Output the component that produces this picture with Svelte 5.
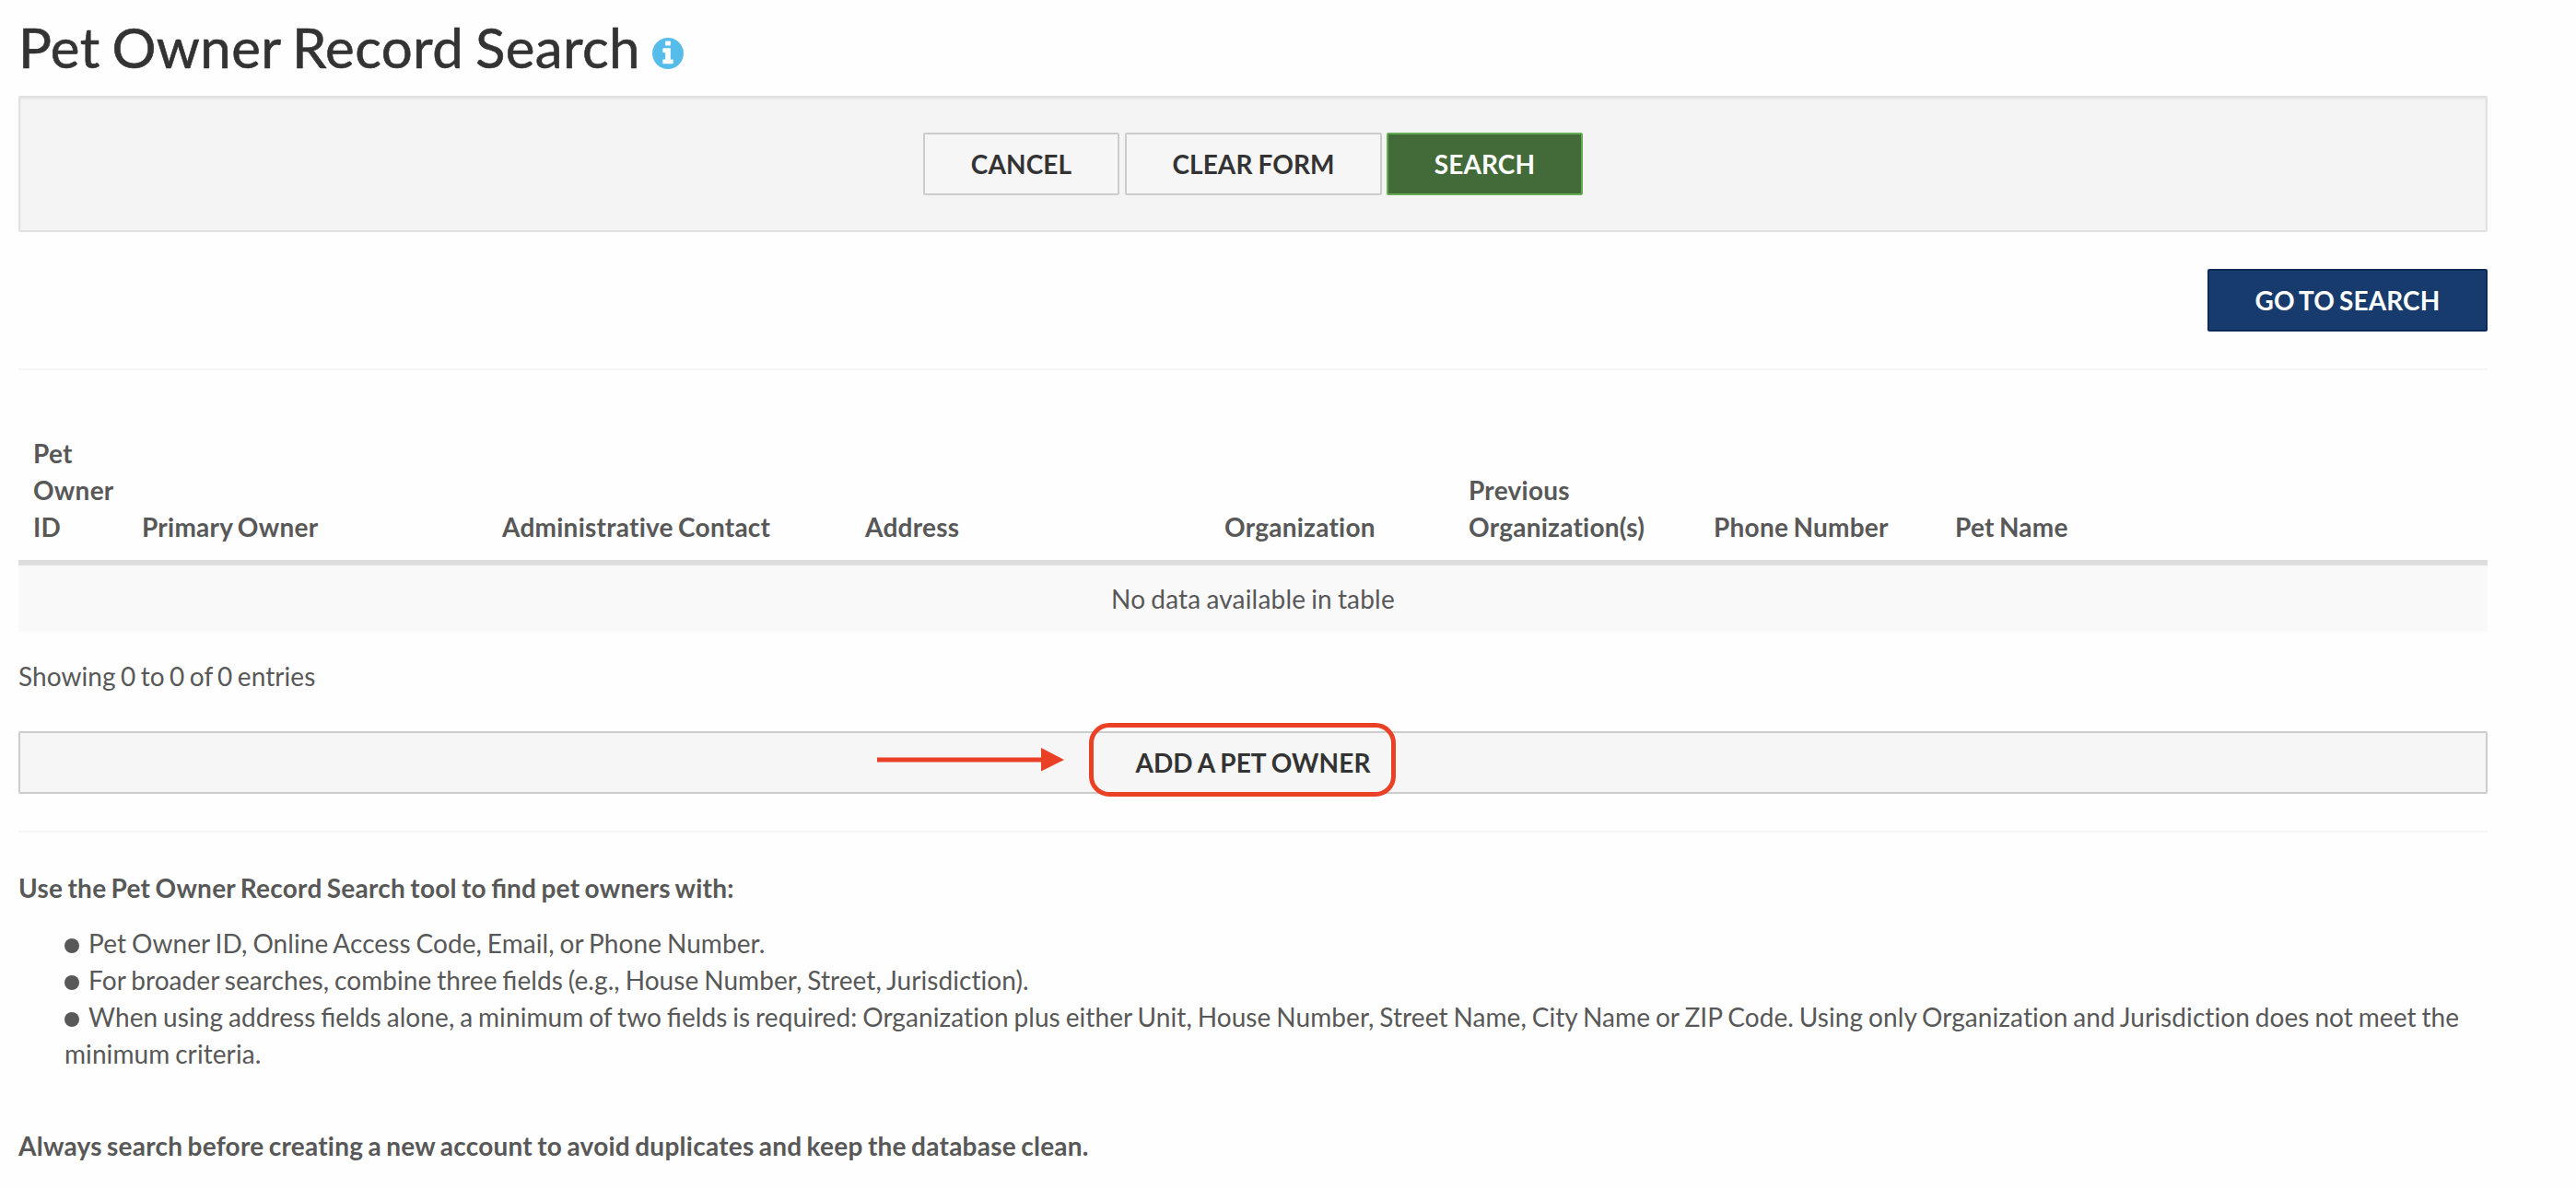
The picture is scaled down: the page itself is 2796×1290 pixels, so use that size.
<script lang="ts">
  type Column = { label: string; width: number };

  const columns: Column[] = [
    { label: "Pet Owner ID", width: 118 },
    { label: "Primary Owner", width: 391 },
    { label: "Administrative Contact", width: 394 },
    { label: "Address", width: 390 },
    { label: "Organization", width: 265 },
    { label: "Previous Organization(s)", width: 266 },
    { label: "Phone Number", width: 262 },
    { label: "Pet Name", width: 594 },
  ];

  const tips = [
    "Pet Owner ID, Online Access Code, Email, or Phone Number.",
    "For broader searches, combine three fields (e.g., House Number, Street, Jurisdiction).",
    "When using address fields alone, a minimum of two fields is required: Organization plus either Unit, House Number, Street Name, City Name or ZIP Code. Using only Organization and Jurisdiction does not meet the minimum criteria.",
  ];
</script>

<!-- "fi" is the only pair that is set as a ligature -->
{#snippet ligated(text: string)}
  {#each text.split(/(fi)/) as part}{#if part === "fi"}<span class="liga">fi</span>{:else}{part}{/if}{/each}
{/snippet}

<main>
  <h1>
    <span>Pet Owner Record Search</span>
    <svg class="info" viewBox="0 0 1536 1536" aria-label="Information">
      <path
        d="M1024 1248v-160q0-14-9-23t-23-9h-96v-512q0-14-9-23t-23-9h-320q-14 0-23 9t-9 23v160q0 14 9 23t23 9h96v320h-96q-14 0-23 9t-9 23v160q0 14 9 23t23 9h448q14 0 23-9t9-23zM896 352v-160q0-14-9-23t-23-9h-192q-14 0-23 9t-9 23v160q0 14 9 23t23 9h192q14 0 23-9t9-23zM1536 768q0 209-103 385.500t-279.500 279.500-385.500 103-385.500-103-279.500-279.500-103-385.500 103-385.500 279.500-279.500 385.500-103 385.500 103 279.500 279.500 103 385.500z"
      />
    </svg>
  </h1>

  <div class="well">
    <button class="btn cancel">Cancel</button>
    <button class="btn clear">Clear Form</button>
    <button class="btn success">Search</button>
  </div>

  <div class="go">
    <button class="btn primary">Go to Search</button>
  </div>

  <hr />

  <table>
    <colgroup>
      {#each columns as column}
        <col style="width: {column.width}px" />
      {/each}
    </colgroup>
    <thead>
      <tr>
        {#each columns as column}
          <th>{column.label}</th>
        {/each}
      </tr>
    </thead>
    <tbody>
      <tr>
        <td colspan={columns.length}>No data available in table</td>
      </tr>
    </tbody>
  </table>

  <p class="count">Showing 0 to 0 of 0 entries</p>

  <div class="add">
    <button class="btn block">Add a Pet Owner</button>
    <svg class="arrow" viewBox="0 0 203 26">
      <path d="M0 10.500h178V0l25 13-25 12.500v-10H0z" />
    </svg>
    <span class="highlight"></span>
  </div>

  <hr />

  <section>
    <p><strong>{@render ligated("Use the Pet Owner Record Search tool to find pet owners with:")}</strong></p>
    <ul>
      {#each tips as tip}
        <li>{@render ligated(tip)}</li>
      {/each}
    </ul>
    <p><strong>Always search before creating a new account to avoid duplicates and keep the database clean.</strong></p>
  </section>
</main>

<style>
  :global(body) {
    margin: 0;
    background: #fefefe;
    overflow: hidden;
  }

  main {
    box-sizing: border-box;
    width: 2720px;
    padding: 0 20px;
    color: #585858;
    font-family: Lato, sans-serif;
    font-size: 28px;
    font-variant-ligatures: none;
    letter-spacing: 0.08px;
    line-height: 40px;
    word-spacing: -1.4px;
  }

  .liga {
    font-variant-ligatures: common-ligatures;
    letter-spacing: 0;
  }

  h1 {
    display: flex;
    align-items: flex-start;
    gap: 13px;
    height: 87px;
    margin: 0;
    padding-top: 17px;
    color: #333;
    font-size: 60px;
    font-weight: 400;
    letter-spacing: 0.4px;
    line-height: 68px;
    word-spacing: -3px;
    -webkit-text-stroke: 0.6px #333;
  }

  .info {
    width: 34px;
    height: 34px;
    margin-top: 24px;
    fill: #56bcea;
  }

  .well {
    display: flex;
    justify-content: center;
    gap: 6px;
    box-sizing: border-box;
    height: 148px;
    padding: 38px;
    border: 2px solid #e1e1e1;
    border-radius: 2px;
    background: #f4f4f4;
    box-shadow: inset 0 2px 2px rgba(0, 0, 0, 0.05);
  }

  .btn {
    box-sizing: border-box;
    height: 68px;
    padding: 0;
    border: 2px solid #ccc;
    border-radius: 2px;
    background: #f6f6f6;
    color: #333;
    font: 700 28px/40px Lato, sans-serif;
    letter-spacing: 0.1px;
    text-transform: uppercase;
    white-space: nowrap;
    word-spacing: -1px;
  }

  .cancel {
    width: 213px;
  }

  .clear {
    width: 279px;
  }

  .success {
    width: 213px;
    margin-left: -1px;
    border-color: #64ac53;
    background: #436b3a;
    color: #fff;
  }

  .primary {
    width: 304px;
    border-color: #0d2b55;
    background: #173b6c;
    color: #fff;
    word-spacing: -1.8px;
  }

  .block {
    display: block;
    width: 100%;
  }

  .go {
    display: flex;
    justify-content: flex-end;
    margin: 40px 0;
  }

  hr {
    height: 2px;
    margin: 40px 0;
    border: 0;
    background: #f5f5f5;
  }

  table {
    width: 2680px;
    margin-top: 54px;
    border-collapse: separate;
    border-spacing: 0;
    table-layout: fixed;
  }

  th,
  strong {
    font-weight: 700;
    letter-spacing: 0.25px;
    word-spacing: -1.8px;
  }

  th {
    padding: 16px;
    border-bottom: 6px solid #ddd;
    text-align: left;
    vertical-align: bottom;
  }

  td {
    padding: 16px;
    background: #f9f9f9;
    letter-spacing: 0.2px;
    text-align: center;
  }

  .count {
    margin: 28px 0 40px;
    word-spacing: -1.9px;
  }

  .add {
    position: relative;
  }

  /* callout marks sit on top of the full-width button */
  .arrow {
    position: absolute;
    top: 18px;
    left: 932px;
    width: 203px;
    height: 26px;
    fill: #ea4025;
  }

  .highlight {
    position: absolute;
    top: -9px;
    left: 1162px;
    box-sizing: border-box;
    width: 333px;
    height: 80px;
    border: 5px solid #ea4025;
    border-radius: 22px;
  }

  p {
    margin: 0;
  }

  ul {
    margin: 20px 0 60px;
    padding: 0 0 0 50px;
    list-style: none;
  }

  li::before {
    content: "";
    display: inline-block;
    width: 16px;
    height: 16px;
    margin-right: 10px;
    border-radius: 50%;
    background: #585858;
  }
</style>
